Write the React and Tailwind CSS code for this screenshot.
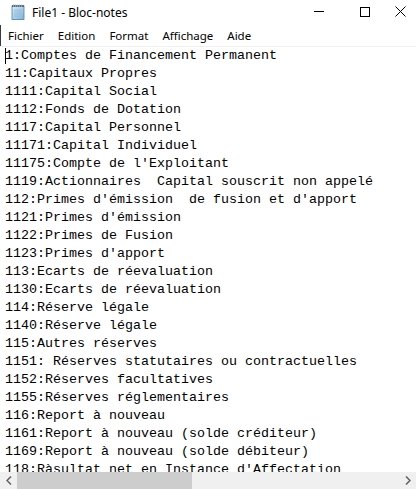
export default function App() {
  const lines = [
    "1:Comptes de Financement Permanent",
    "11:Capitaux Propres",
    "1111:Capital Social",
    "1112:Fonds de Dotation",
    "1117:Capital Personnel",
    "11171:Capital Individuel",
    "11175:Compte de l'Exploitant",
    "1119:Actionnaires  Capital souscrit non appelé",
    "112:Primes d'émission  de fusion et d'apport",
    "1121:Primes d'émission",
    "1122:Primes de Fusion",
    "1123:Primes d'apport",
    "113:Ecarts de réevaluation",
    "1130:Ecarts de réevaluation",
    "114:Réserve légale",
    "1140:Réserve légale",
    "115:Autres réserves",
    "1151: Réserves statutaires ou contractuelles",
    "1152:Réserves facultatives",
    "1155:Réserves réglementaires",
    "116:Report à nouveau",
    "1161:Report à nouveau (solde créditeur)",
    "1169:Report à nouveau (solde débiteur)",
    "118:Ràsultat net en Instance d'Affectation",
  ];
  const menu = ["Fichier", "Edition", "Format", "Affichage", "Aide"];

  return (
    <div className="w-[416px] h-[489px] bg-white overflow-hidden flex flex-col font-['Noto_Sans',sans-serif] text-black">
      {/* Title bar */}
      <div className="h-[25px] flex items-center shrink-0">
        <svg width="16" height="16" viewBox="0 0 16 16" className="ml-[10px] mt-[-1px]">
          <defs>
            <linearGradient id="pad" x1="0" y1="0" x2="1" y2="1">
              <stop offset="0" stopColor="#d6ecfa" />
              <stop offset="1" stopColor="#7fb3d9" />
            </linearGradient>
          </defs>
          <rect x="2" y="2" width="12" height="13.5" fill="url(#pad)" stroke="#4d7fa8" strokeWidth="0.8" />
          <rect x="2" y="1" width="12" height="2" fill="#5a6e80" />
          <path d="M3.5 0.5v2.5M5.5 0.5v2.5M7.5 0.5v2.5M9.5 0.5v2.5M11.5 0.5v2.5" stroke="#9aa8b4" strokeWidth="0.8" />
          <path d="M4 6h8M4 8h8M4 10h8M4 12h6" stroke="#8fb6d4" strokeWidth="0.7" />
        </svg>
        <span className="ml-[6px] text-[12px] leading-none">File1 - Bloc-notes</span>
        <div className="ml-auto flex items-center h-full">
          <div className="w-[46px] h-full flex items-center justify-center">
            <div className="w-[10px] h-px bg-black mt-[-2px]" />
          </div>
          <div className="w-[46px] h-full flex items-center justify-center">
            <div className="w-[10px] h-[10px] border border-black mt-[-2px]" />
          </div>
          <div className="w-[28px] h-full flex items-center justify-start pl-[7px]">
            <svg width="11" height="11" viewBox="0 0 11 11" className="mt-[-2px]">
              <path d="M0.5 0.5l10 10M10.5 0.5l-10 10" stroke="#000" strokeWidth="1" />
            </svg>
          </div>
        </div>
      </div>

      {/* Menu bar */}
      <div className="h-[21px] flex items-center shrink-0 border-l border-[#3a3a3a] text-[11.5px] leading-none">
        {menu.map((m) => (
          <span key={m} className="px-[7px]">
            {m}
          </span>
        ))}
      </div>
      <div className="h-px bg-[#f0f0f0] shrink-0" />

      {/* Text area */}
      <div className="relative flex-1 overflow-hidden pl-[5px] font-['Liberation_Mono',monospace] text-[13.33px] leading-[18px] whitespace-pre">
        <div className="absolute left-[5px] top-[1px] w-px h-[16px] bg-black" />
        {lines.map((l, i) => (
          <div key={i}>{l}</div>
        ))}
      </div>

      {/* Horizontal scrollbar */}
      <div className="h-[17px] shrink-0 bg-[#f0f0f0] flex items-center">
        <div className="w-[17px] h-full flex items-center justify-center">
          <svg width="6" height="9" viewBox="0 0 6 9">
            <path d="M5 0.5L1 4.5L5 8.5" fill="none" stroke="#606060" strokeWidth="1.5" />
          </svg>
        </div>
        <div className="w-[175px] h-full bg-[#cdcdcd]" />
        <div className="flex-1" />
        <div className="w-[17px] h-full flex items-center justify-center">
          <svg width="6" height="9" viewBox="0 0 6 9">
            <path d="M1 0.5L5 4.5L1 8.5" fill="none" stroke="#606060" strokeWidth="1.5" />
          </svg>
        </div>
      </div>
    </div>
  );
}
